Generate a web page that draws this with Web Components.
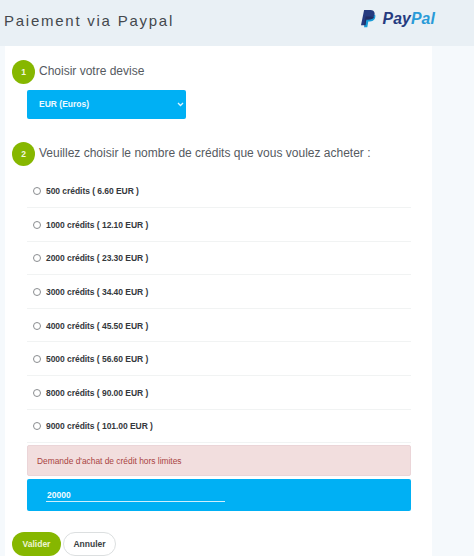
<!DOCTYPE html>
<html lang="fr">
<head>
<meta charset="utf-8">
<title>Paiement via Paypal</title>
<style>
  html { margin: 0; padding: 0; background: #fff; }
  body { margin: 0; padding: 0; background: #f5f9fc; font-family: "Liberation Sans", Arial, sans-serif; height: 556px; overflow: hidden; }
</style>
</head>
<body>
<pay-page>
  <pay-header slot="header">Paiement via Paypal</pay-header>
  <pay-step number="1">Choisir votre devise</pay-step>
  <currency-select></currency-select>
  <pay-step number="2" class="second">Veuillez choisir le nombre de crédits que vous voulez acheter :</pay-step>
  <credit-list>
    <credit-option>500 crédits ( 6.60 EUR )</credit-option>
    <credit-option>1000 crédits ( 12.10 EUR )</credit-option>
    <credit-option>2000 crédits ( 23.30 EUR )</credit-option>
    <credit-option>3000 crédits ( 34.40 EUR )</credit-option>
    <credit-option>4000 crédits ( 45.50 EUR )</credit-option>
    <credit-option>5000 crédits ( 56.60 EUR )</credit-option>
    <credit-option>8000 crédits ( 90.00 EUR )</credit-option>
    <credit-option>9000 crédits ( 101.00 EUR )</credit-option>
  </credit-list>
  <alert-box>Demande d'achat de crédit hors limites</alert-box>
  <amount-box value="20000"></amount-box>
  <form-actions></form-actions>
</pay-page>

<script>
  function shadow(el, html) {
    const root = el.attachShadow({ mode: "open" });
    root.innerHTML = html;
    return root;
  }

  customElements.define('pay-page', class extends HTMLElement {
    connectedCallback() {
      if (this.shadowRoot) return;
      shadow(this, `
        <style>
          :host { display: block; }
          .card {
            display: flex;
            flex-direction: column;
            box-sizing: border-box;
            height: 510px;
            background: #fff;
            margin: 0 42px 0 5px;
            padding: 14px 0 0 7px;
          }
        </style>
        <slot name="header"></slot>
        <div class="card"><slot></slot></div>
      `);
    }
  });

  customElements.define('pay-header', class extends HTMLElement {
    connectedCallback() {
      if (this.shadowRoot) return;
      shadow(this, `
        <style>
          :host {
            display: flex;
            align-items: flex-start;
            justify-content: space-between;
            box-sizing: border-box;
            height: 46px;
            background: #e9f0f5;
            padding: 12px 39px 0 4px;
          }
          .title { font-size: 15px; line-height: 18px; letter-spacing: 1.75px; color: #44484d; }
          .logo { display: flex; align-items: center; gap: 6px; margin-top: -3px; }
          .word {
            font: italic bold 15.800px/20px "Liberation Sans", Arial, sans-serif;
            color: #253b80;
            letter-spacing: .1px;
          }
          .word span { color: #2a9bd8; }
          svg { display: block; }
        </style>
        <div class="title"><slot></slot></div>
        <div class="logo">
          <svg width="16" height="19" viewBox="0 0 16 19">
            <path fill="#179bd7" d="M14.2 4.8c.9 3.6-1.500 6.700-5.300 6.700H7.300l-1 5.800H3l.4-2.300 1.800-9.300z"/>
            <path fill="#253b80" d="M3.100 0h5.600c3.300 0 5.300 1.500 4.900 4.300-.5 3.500-2.900 5.300-6.400 5.300H5.300l-1 5.600H0z"/>
            <path fill="#222d65" d="M4.700 6.600h4.700c1.400 0 2.700.3 3.800 1-1 1.300-3 2-5.900 2H5.300l-.9 5.600H3.200z"/>
          </svg>
          <div class="word">Pay<span>Pal</span></div>
        </div>
      `);
    }
  });

  customElements.define('pay-step', class extends HTMLElement {
    connectedCallback() {
      if (this.shadowRoot) return;
      const second = this.classList.contains('second');
      shadow(this, `
        <style>
          :host {
            display: flex;
            align-items: flex-start;
            gap: 4px;
            margin-top: ${second ? '23px' : '0'};
            color: #555a5f;
            font-size: 12px;
            line-height: 17px;
          }
          .num {
            flex: none;
            width: 23px;
            height: 24px;
            border-radius: 50%;
            background: #86b700;
            color: #f3f7e0;
            font-size: 8.500px;
            font-weight: bold;
            line-height: 24px;
            text-align: center;
          }
          .label { white-space: nowrap; padding-top: 3px; }
        </style>
        <span class="num">${this.getAttribute('number')}</span>
        <span class="label"><slot></slot></span>
      `);
    }
  });

  customElements.define('currency-select', class extends HTMLElement {
    connectedCallback() {
      if (this.shadowRoot) return;
      const chevron = "data:image/svg+xml,%3Csvg xmlns='http://www.w3.org/2000/svg' width='7' height='5'%3E%3Cpath d='M1 1l2.500 2.500L6 1' fill='none' stroke='%23dff5ff' stroke-width='1.300'/%3E%3C/svg%3E";
      shadow(this, `
        <style>
          :host { display: block; margin: 6px 0 0 15px; }
          select {
            display: block;
            appearance: none;
            box-sizing: border-box;
            width: 159px;
            height: 28.500px;
            padding: 0 0 0 12px;
            border: 0;
            border-radius: 2px;
            background: #00b0f4 url("${chevron}") no-repeat right 2px center;
            color: #eef9ff;
            font: bold 8.500px "Liberation Sans", Arial, sans-serif;
            outline: none;
          }
        </style>
        <select aria-label="Devise">
          <option>EUR (Euros)</option>
        </select>
      `);
    }
  });

  customElements.define('credit-list', class extends HTMLElement {
    connectedCallback() {
      if (this.shadowRoot) return;
      shadow(this, `
        <style>
          :host { display: flex; flex-direction: column; margin: 9px 21px 0 15px; }
        </style>
        <slot></slot>
      `);
    }
  });

  customElements.define('credit-option', class extends HTMLElement {
    connectedCallback() {
      if (this.shadowRoot) return;
      shadow(this, `
        <style>
          :host {
            display: block;
            height: 33.600px;
            box-sizing: border-box;
            border-bottom: 1px solid #f1f3f3;
          }
          label {
            display: flex;
            align-items: center;
            gap: 5px;
            height: 32.600px;
            padding: 1px 0 0 6px;
            box-sizing: border-box;
            font-size: 8.500px;
            font-weight: bold;
            color: #34383c;
            letter-spacing: -.05px;
          }
          input {
            appearance: none;
            box-sizing: border-box;
            flex: none;
            width: 8px;
            height: 8px;
            margin: 0;
            border: 1px solid #8a8d90;
            border-radius: 50%;
            background: #fff;
          }
        </style>
        <label><input type="radio" name="credits"><span><slot></slot></span></label>
      `);
    }
  });

  customElements.define('alert-box', class extends HTMLElement {
    connectedCallback() {
      if (this.shadowRoot) return;
      shadow(this, `
        <style>
          :host {
            display: block;
            box-sizing: border-box;
            height: 31px;
            margin: 2px 21px 0 15px;
            padding: 0 9px;
            background: #f2dede;
            border: 1px solid #ebd5d8;
            border-radius: 2px;
            color: #a94442;
            font-size: 8.400px;
            line-height: 31px;
          }
        </style>
        <slot></slot>
      `);
    }
  });

  customElements.define('amount-box', class extends HTMLElement {
    connectedCallback() {
      if (this.shadowRoot) return;
      shadow(this, `
        <style>
          :host {
            display: block;
            box-sizing: border-box;
            height: 32px;
            margin: 3px 21px 0 15px;
            padding: 7px 0 0 19px;
            background: #00b0f4;
            border-radius: 2px;
          }
          input {
            display: block;
            box-sizing: border-box;
            width: 179px;
            height: 16px;
            padding: 2px 1px 0;
            border: 0;
            border-bottom: 1px solid #cfeffd;
            background: transparent;
            color: #f2fbff;
            font: bold 8.500px "Liberation Sans", Arial, sans-serif;
            outline: none;
          }
        </style>
        <input type="text" value="${this.getAttribute('value')}" aria-label="Crédits">
      `);
    }
  });

  customElements.define('form-actions', class extends HTMLElement {
    connectedCallback() {
      if (this.shadowRoot) return;
      shadow(this, `
        <style>
          :host { display: flex; gap: 2px; margin-top: 21px; }
          button {
            box-sizing: border-box;
            height: 24px;
            padding: 0;
            border-radius: 12px;
            font: bold 8.500px "Liberation Sans", Arial, sans-serif;
          }
          .ok { width: 49px; border: 0; background: #86b700; color: #eef5d2; }
          .no { width: 53px; border: 1px solid #dcdfe0; background: #fff; color: #3a3e42; }
        </style>
        <button class="ok" type="button">Valider</button>
        <button class="no" type="button">Annuler</button>
      `);
    }
  });
</script>
</body>
</html>
